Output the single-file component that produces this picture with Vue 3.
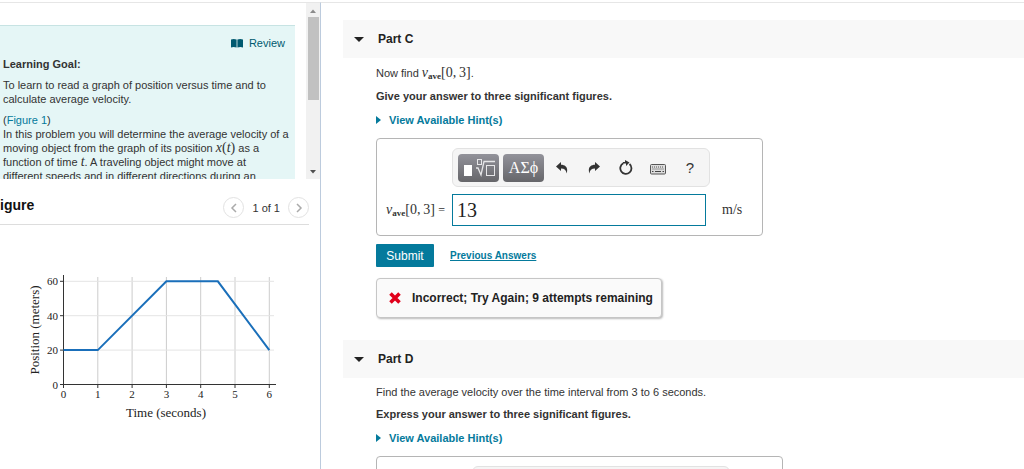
<template>
  <div class="page">
    <aside class="side">
      <section class="intro">
        <div class="goal">
          <a class="review" href="#">
            <svg width="12" height="9" viewBox="0 0 12 9" aria-hidden="true">
              <path d="M0 0.5Q3 -0.3 5.6 0.6V8.6Q3 7.7 0 8.4ZM6.4 0.6Q9 -0.3 12 0.5V8.4Q9 7.7 6.4 8.6Z" fill="#005a70" />
            </svg>
            Review
          </a>
          <h2>Learning Goal:</h2>
          <p>To learn to read a graph of position versus time and to calculate average velocity.</p>
          <p>
            (<a href="#figure">Figure 1</a>)<br />
            In this problem you will determine the average velocity of a moving object from the graph of its position
            <span class="math"><i>x</i>(<i>t</i>)</span> as a function of time <span class="math"><i>t</i></span>. A
            traveling object might move at<br />
            different speeds and in different directions during an
          </p>
        </div>
        <div class="scrollbar" aria-hidden="true">
          <svg width="14" height="14" viewBox="0 0 14 14"><path d="M4 10L7 6.500L10 10Z" fill="#8b8b8b" /></svg>
          <div class="thumb"></div>
          <svg class="down" width="14" height="14" viewBox="0 0 14 14"><path d="M4 5L7 8.500L10 5Z" fill="#505050" /></svg>
        </div>
      </section>

      <section id="figure" class="figure">
        <header class="figure-head">
          <h2>igure</h2>
          <div class="pager">
            <button type="button" aria-label="Previous figure">
              <svg width="8" height="10" viewBox="0 0 8 10"><path d="M6 1L2 5L6 9" /></svg>
            </button>
            <span>1 of 1</span>
            <button type="button" aria-label="Next figure">
              <svg width="8" height="10" viewBox="0 0 8 10"><path d="M2 1L6 5L2 9" /></svg>
            </button>
          </div>
        </header>
        <svg class="chart" viewBox="0 0 320 160" role="img" aria-label="Position versus time">
          <g class="grid">
            <path v-for="t in 6" :key="'v' + t" class="v" :d="`M${px(t)} 17V124`" />
            <path v-for="m in [20, 40, 60]" :key="'h' + m" class="h" :d="`M63 ${py(m)}H274`" />
          </g>
          <g class="axis">
            <path d="M63.500 15V125M63 124.500H276" />
            <path v-for="t in 7" :key="'x' + t" :d="`M${px(t - 1)} 124V128`" />
            <path v-for="m in [0, 20, 40, 60]" :key="'y' + m" :d="`M60 ${py(m)}H63`" />
          </g>
          <polyline class="line" :points="points" />
          <text v-for="t in 7" :key="'tx' + t" :x="px(t - 1)" y="138" text-anchor="middle">{{ t - 1 }}</text>
          <text v-for="m in [0, 20, 40, 60]" :key="'ty' + m" x="58" :y="py(m) + 4" text-anchor="end">{{ m }}</text>
          <text class="title" x="166" y="157" text-anchor="middle">Time (seconds)</text>
          <text class="title" transform="translate(39 70) rotate(-90)" text-anchor="middle">Position (meters)</text>
        </svg>
      </section>
    </aside>

    <main class="main">
      <section class="part">
        <h2 class="part-head">
          <button type="button" aria-expanded="true"><span class="caret"></span>Part C</button>
        </h2>
        <div class="part-body">
          <p class="ask">Now find <span class="math"><i>v</i><sub>ave</sub>[0,&#8201;3]</span>.</p>
          <p class="strong">Give your answer to three significant figures.</p>
          <a class="hint" href="#"><span class="arrow"></span>View Available Hint(s)</a>
          <form class="answer" @submit.prevent>
            <div class="toolbar">
              <button type="button" class="key" aria-label="Templates">
                <svg width="41" height="28" viewBox="0 0 41 28">
                  <rect x="6" y="11" width="8" height="11" fill="#fff" />
                  <g fill="none" stroke="#e6e6e8">
                    <rect x="19.500" y="5.500" width="4" height="5" />
                    <path d="M18 14H20L23 21L26 7.500H37" stroke-width="1.300" />
                    <rect x="28.500" y="11.500" width="8" height="10" />
                  </g>
                </svg>
              </button>
              <button type="button" class="key">ΑΣϕ</button>
              <button type="button" class="tool" aria-label="Undo">
                <svg width="12" height="12" viewBox="0 0 12 12"><path d="M0 4.500L5 0V2.700C10 2.800 12.500 6 10.500 11.500C10.300 8 8.500 6.500 5 6.500V9Z" fill="#333" /></svg>
              </button>
              <button type="button" class="tool" aria-label="Redo">
                <svg width="12" height="12" viewBox="0 0 12 12"><path d="M12 4.500L7 0V2.700C2 2.800 -0.500 6 1.500 11.500C1.700 8 3.500 6.500 7 6.500V9Z" fill="#333" /></svg>
              </button>
              <button type="button" class="tool" aria-label="Reset">
                <svg width="14" height="15" viewBox="0 0 14 15">
                  <path d="M10.500 4A5.600 5.600 0 1 1 4.300 3.300" fill="none" stroke="#333" stroke-width="1.800" />
                  <path d="M6 0L10.500 2.500L7 6V3.500H4V2H6Z" fill="#333" />
                </svg>
              </button>
              <button type="button" class="tool" aria-label="Keyboard shortcuts">
                <svg class="keyboard" width="16" height="11" viewBox="0 0 16 11">
                  <rect x="0.500" y="0.500" width="15" height="9.500" rx="1" fill="#ddd" stroke="#555" />
                  <path d="M2 3H14M2.500 5H14" stroke="#555" stroke-dasharray="1 1" />
                  <path d="M2 7.500H3.500M5 7.500H11M12.500 7.500H14" stroke="#444" />
                </svg>
              </button>
              <button type="button" class="tool help" aria-label="Help">?</button>
            </div>
            <label class="math" for="vave"><i>v</i><sub>ave</sub>[0,&#8201;3] <span class="eq">=</span></label>
            <input id="vave" v-model="answer" type="text" autocomplete="off" />
            <span class="unit">m/s</span>
          </form>
          <div class="actions">
            <button type="button" class="submit">Submit</button>
            <a href="#">Previous Answers</a>
          </div>
          <div class="feedback" role="status">
            <svg width="12" height="12" viewBox="0 0 12 12" aria-hidden="true"><path d="M1.500 1.500L10.500 10.500M10.500 1.500L1.500 10.500" stroke="#e0001b" stroke-width="3.600" /></svg>
            Incorrect; Try Again; 9 attempts remaining
          </div>
        </div>
      </section>

      <section class="part">
        <h2 class="part-head">
          <button type="button" aria-expanded="true"><span class="caret"></span>Part D</button>
        </h2>
        <div class="part-body">
          <p class="ask">Find the average velocity over the time interval from 3 to 6 seconds.</p>
          <p class="strong">Express your answer to three significant figures.</p>
          <a class="hint" href="#"><span class="arrow"></span>View Available Hint(s)</a>
          <div class="answer answer-next"><div class="toolbar"></div></div>
        </div>
      </section>
    </main>
  </div>
</template>

<script setup>
import { computed, ref } from 'vue'

const answer = ref('13')

const track = [
  [0, 20],
  [1, 20],
  [3, 60],
  [4.5, 60],
  [6, 20]
]

// chart scales: seconds and meters to svg units
const px = (t) => 63.5 + t * 34.3
const py = (m) => 124.5 - m * 1.72

const points = computed(() => track.map(([t, m]) => `${px(t)},${py(m)}`).join(' '))
</script>

<style>
body {
  background: #fff;
}
</style>

<style scoped>
* {
  box-sizing: border-box;
}

.page {
  display: grid;
  grid-template-columns: 321px 1fr;
  height: 100vh;
  overflow: hidden;
  padding-top: 2px;
  font-family: "Liberation Sans", Arial, sans-serif;
  font-size: 11px;
  line-height: 14px;
  color: #333;
}

.side,
.main {
  border-top: 1px solid #e6e6e6;
  min-width: 0;
}

.side {
  border-right: 1px solid #bccbdd;
}

h2,
p {
  margin: 0;
}

a {
  color: #047a9c;
  text-decoration: none;
}

button {
  font-family: inherit;
  cursor: pointer;
}

.math {
  font-family: "Liberation Serif", serif;
  font-size: 14px;
  line-height: 1;
}

.math sub {
  font-size: 9px;
  font-weight: bold;
  line-height: 0;
  vertical-align: -2px;
}

.intro {
  display: flex;
  justify-content: space-between;
  height: 176px;
  overflow: hidden;
}

.goal {
  width: 295px;
  margin-top: 22px;
  padding: 10px 4px 0 3px;
  border-top: 1px solid #c7e3e3;
  background: #e5f6f6;
}

.goal h2 {
  margin: 7px 0;
  font-size: 11px;
}

.goal p {
  margin-bottom: 7px;
  line-height: 14px;
}

.goal .math {
  line-height: 14px;
}

.review {
  display: flex;
  align-items: center;
  justify-content: flex-end;
  gap: 6px;
  padding-right: 6px;
  color: #005a70;
}

.scrollbar {
  display: flex;
  flex-direction: column;
  align-items: center;
  width: 14px;
  background: #f1f1f1;
}

.thumb {
  width: 11px;
  height: 83px;
  background: #c1c1c1;
}

.scrollbar .down {
  margin-top: auto;
}

.figure-head {
  display: flex;
  align-items: center;
  justify-content: space-between;
  height: 46px;
  margin-right: 11px;
  padding-top: 12px;
  border-bottom: 1px solid #ddd;
}

.figure-head h2 {
  padding-bottom: 5px;
  font-size: 14px;
  color: #111;
}

.pager {
  display: flex;
  align-items: center;
  gap: 8px;
}

.pager button {
  display: flex;
  align-items: center;
  justify-content: center;
  width: 21px;
  height: 21px;
  padding: 0;
  border: 1px solid #e2e2e2;
  border-radius: 50%;
  background: #fff;
}

.pager path {
  fill: none;
  stroke: #aaa;
  stroke-width: 1.5;
}

.chart {
  display: block;
  width: 100%;
  margin-top: 35px;
  font-family: "Liberation Serif", serif;
  font-size: 11px;
}

.chart text {
  fill: #222;
}

.chart .title {
  font-size: 13px;
}

.grid .v {
  stroke: #ccc;
}

.grid .h {
  stroke: #e4e4e4;
}

.axis {
  stroke: #333;
}

.line {
  fill: none;
  stroke: #1a6fba;
  stroke-width: 2;
}

.main {
  padding: 17px 0 0 22px;
}

.part {
  margin-bottom: 22px;
}

.part-head {
  background: #f8f8f8;
}

.part-head button {
  display: flex;
  align-items: center;
  gap: 14px;
  width: 100%;
  height: 38px;
  padding: 0 11px;
  border: 0;
  background: none;
  font-size: 12px;
  font-weight: bold;
  color: #222;
}

.caret {
  border: 5px solid transparent;
  border-top-color: #222;
  border-bottom: 0;
}

.part-body {
  padding: 7px 0 0 33px;
}

.ask {
  margin-bottom: 8px;
}

.ask .math {
  line-height: 16px;
}

.strong {
  margin-bottom: 10px;
  font-weight: bold;
}

.hint {
  display: flex;
  align-items: center;
  gap: 8px;
  font-weight: bold;
}

.arrow {
  border: 4px solid transparent;
  border-left: 5px solid #047a9c;
  border-right: 0;
}

.answer {
  display: grid;
  grid-template-columns: 66px 254px 1fr;
  align-items: center;
  row-gap: 7px;
  width: 387px;
  margin-top: 11px;
  padding: 9px;
  border: 1px solid #b5b5b5;
  border-radius: 4px;
}

.toolbar {
  display: flex;
  align-items: center;
  grid-column: 2 / 4;
  gap: 4px;
  width: 258px;
  height: 39px;
  padding: 0 5px;
  border: 1px solid #e2e2e2;
  border-radius: 6px;
  background: #f5f5f5;
}

.key {
  display: flex;
  align-items: center;
  justify-content: center;
  width: 41px;
  height: 28px;
  padding: 0;
  border: 0;
  border-radius: 4px;
  background: linear-gradient(#92929a, #66666a);
  font-family: "Liberation Serif", serif;
  font-size: 16px;
  color: #fff;
}

.tool {
  display: flex;
  align-items: center;
  justify-content: center;
  width: 28px;
  height: 28px;
  padding: 0;
  border: 0;
  background: none;
}

.keyboard {
  margin-top: 3px;
}

.help {
  font-size: 15px;
  color: #333;
}

.answer label {
  white-space: nowrap;
}

.eq {
  font-size: 12px;
}

.answer input {
  width: 100%;
  height: 32px;
  padding: 0 4px;
  border: 1px solid #047a9c;
  border-radius: 0;
  outline: 0;
  font-family: "Liberation Serif", serif;
  font-size: 20px;
  color: #222;
}

.unit {
  padding-left: 16px;
  font-family: "Liberation Serif", serif;
  font-size: 14px;
}

.actions {
  display: flex;
  align-items: center;
  gap: 16px;
  margin-top: 8px;
}

.actions a {
  font-size: 10px;
  font-weight: bold;
  text-decoration: underline;
}

.submit {
  width: 58px;
  height: 23px;
  padding: 0;
  border: 0;
  border-radius: 1px;
  background: #047a9c;
  font-size: 12px;
  color: #fff;
}

.feedback {
  display: flex;
  align-items: center;
  gap: 11px;
  width: max-content;
  height: 40px;
  margin-top: 11px;
  padding: 0 8px 0 12px;
  border: 1px solid #c6c6c6;
  border-radius: 4px;
  background: #fafafa;
  box-shadow: 1px 1px 2px #bbb;
  font-size: 12px;
  font-weight: bold;
  color: #222;
}

.answer-next {
  grid-template-columns: 86px 1fr;
  width: 407px;
}

.answer-next .toolbar {
  grid-column: 2;
}
</style>
